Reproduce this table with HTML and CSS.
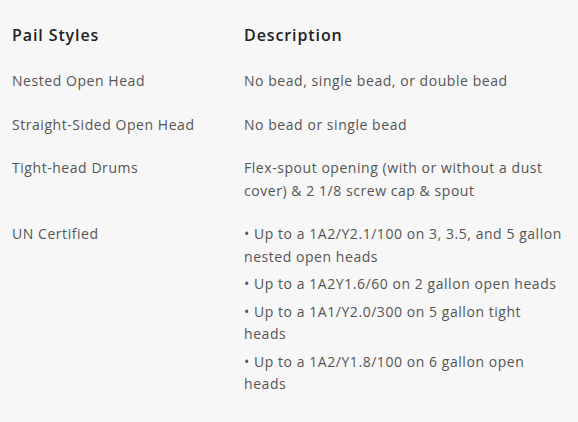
FILE: index.html
```html
<!DOCTYPE html>
<html>
<head>
<meta charset="utf-8">
<link rel="stylesheet" href="styles.css">
</head>
<body>
<div class="table">
  <div class="row head">
    <div class="c1">Pail Styles</div>
    <div class="c2">Description</div>
  </div>
  <div class="row">
    <div class="c1">Nested Open Head</div>
    <div class="c2">No bead, single bead, or double bead</div>
  </div>
  <div class="row">
    <div class="c1">Straight-Sided Open Head</div>
    <div class="c2">No bead or single bead</div>
  </div>
  <div class="row">
    <div class="c1">Tight-head Drums</div>
    <div class="c2">Flex-spout opening (with or without a dust<br>cover) &amp; 2 1/8 screw cap &amp; spout</div>
  </div>
  <div class="row">
    <div class="c1">UN Certified</div>
    <div class="c2 list">
      <div class="item">• Up to a 1A2/Y2.1/100 on 3, 3.5, and 5 gallon<br>nested open heads</div>
      <div class="item">• Up to a 1A2Y1.6/60 on 2 gallon open heads</div>
      <div class="item">• Up to a 1A1/Y2.0/300 on 5 gallon tight<br>heads</div>
      <div class="item">• Up to a 1A2/Y1.8/100 on 6 gallon open<br>heads</div>
    </div>
  </div>
</div>
</body>
</html>
```
FILE: styles.css
```css
html, body {
  margin: 0;
  padding: 0;
  background: #f7f7f7;
}
body {
  font-family: "Open Sans", "Noto Sans", sans-serif;
  font-size: 14px;
  letter-spacing: 0.55px;
  color: #555;
}
.table {
  padding: 14px 12px 0 12px;
}
.row {
  display: grid;
  grid-template-columns: 232px 1fr;
  padding: 10.5px 0;
  line-height: 22.5px;
}
.head {
  font-weight: 600;
  font-size: 16px;
  letter-spacing: 0.9px;
  color: #222;
  padding-top: 10px;
  padding-bottom: 13px;
}
.c2 {
  white-space: nowrap;
}
.list {
  display: flex;
  flex-direction: column;
  gap: 5px;
}
```
